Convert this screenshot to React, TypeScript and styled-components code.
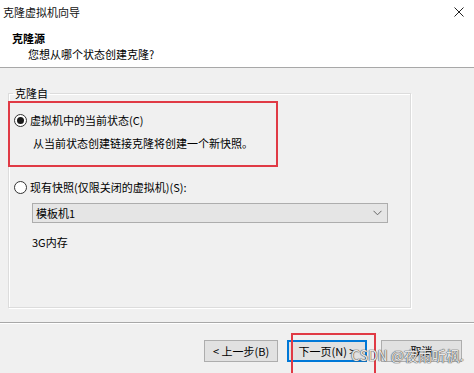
import React from "react";
import styled, { createGlobalStyle } from "styled-components";

const Global = createGlobalStyle`
  html, body { margin: 0; padding: 0; background: #f0f0f0; }
  * { box-sizing: border-box; }
  body { font-family: "Noto Sans CJK SC", "Noto Sans", sans-serif; font-size: 11px; color: #000; }
`;

const Window = styled.div`
  width: 474px;
  height: 373px;
  display: flex;
  flex-direction: column;
  background: #f0f0f0;
  overflow: hidden;
  position: relative;
`;

const Header = styled.div`
  height: 68px;
  background: #fff;
  border-bottom: 1px solid #a8a8a8;
  display: flex;
  flex-direction: column;
`;

const TitleBar = styled.div`
  height: 26px;
  display: flex;
  align-items: center;
  justify-content: space-between;
  padding: 0 10px 2px 3px;
`;

const Title = styled.span`
  font-size: 11px;
  line-height: 15px;
  color: #111;
`;

const HeaderText = styled.div`
  padding: 5px 0 0 12px;
  display: flex;
  flex-direction: column;
  gap: 1px;
`;

const Heading = styled.div`
  font-weight: 700;
  line-height: 15px;
`;

const SubHeading = styled.div`
  padding-left: 16px;
  line-height: 15px;
`;

const Body = styled.div`
  height: 255px;
  border-bottom: 1px solid #a8a8a8;
  box-shadow: 0 1px 0 #fff;
  padding: 18px 0 0 8px;
`;

const Group = styled.fieldset`
  margin: 0;
  width: 403px;
  border: 1px solid #dcdcdc;
  box-shadow: inset 1px 1px 0 #fff, 1px 1px 0 #fff;
  padding: 0 0 57px 0;
  min-width: 0;
`;

const Legend = styled.legend`
  margin-left: 4px;
  padding: 0 2px;
  line-height: 15px;
`;

const Highlight = styled.div`
  margin-left: -1px;
  width: 270px;
  height: 66px;
  border: 2px solid #e03a45;
  padding: 10px 0 0 4px;
  display: flex;
  flex-direction: column;
  gap: 8px;
`;

const OptionRow = styled.label<{ $top?: number }>`
  display: flex;
  align-items: center;
  gap: 3px;
  line-height: 15px;
  margin-top: ${(p) => p.$top ?? 0}px;
  margin-left: ${(p) => (p.$top ? 5 : 0)}px;
`;

const Radio = styled.span<{ $checked?: boolean }>`
  width: 13px;
  height: 13px;
  border-radius: 50%;
  border: 1px solid #333;
  background: #fff;
  display: flex;
  align-items: center;
  justify-content: center;
  flex-shrink: 0;
  &::after {
    content: "";
    width: 7px;
    height: 7px;
    border-radius: 50%;
    background: ${(p) => (p.$checked ? "#1a1a1a" : "transparent")};
  }
`;

const Description = styled.div`
  padding-left: 19px;
  line-height: 15px;
`;

const Select = styled.div`
  margin: 8px 0 0 23px;
  width: 356px;
  height: 20px;
  background: #e5e5e5;
  border: 1px solid #adadad;
  display: flex;
  align-items: center;
  justify-content: space-between;
  padding: 0 5px 0 3px;
  line-height: 15px;
`;

const Note = styled.div`
  margin: 12px 0 0 23px;
  line-height: 15px;
`;

const Footer = styled.div`
  flex: 1;
  display: flex;
  justify-content: flex-end;
  align-items: flex-start;
  padding: 17px 12px 0 0;
  position: relative;
`;

const Button = styled.button<{ $w: number; $mr?: number; $primary?: boolean }>`
  width: ${(p) => p.$w}px;
  height: 22px;
  margin: 0 ${(p) => p.$mr ?? 0}px 0 0;
  padding: 0;
  font-family: inherit;
  font-size: 11px;
  line-height: 15px;
  color: #000;
  background: #e1e1e1;
  border: 1px solid ${(p) => (p.$primary ? "#0078d7" : "#adadad")};
  box-shadow: ${(p) => (p.$primary ? "inset 0 0 0 1px #0078d7" : "none")};
`;

const NextHighlight = styled.div`
  position: absolute;
  left: 291px;
  top: 10px;
  width: 85px;
  height: 44px;
  border: 2px solid #e03a45;
  pointer-events: none;
`;

const Watermark = styled.div`
  position: absolute;
  left: 351px;
  top: 23px;
  font-size: 14px;
  line-height: 18px;
  color: rgba(250, 250, 250, 0.9);
  text-shadow: 0 0 1px #555, 0 0 1px #555, 0 0 1px #666;
  white-space: nowrap;
  pointer-events: none;
`;

export default function App() {
  return (
    <Window>
      <Global />
      <Header>
        <TitleBar>
          <Title>克隆虚拟机向导</Title>
          <svg width="10" height="10" viewBox="0 0 10 10">
            <path d="M0.5 0.5 L9.5 9.5 M9.5 0.5 L0.5 9.5" stroke="#222" strokeWidth="1" fill="none" />
          </svg>
        </TitleBar>
        <HeaderText>
          <Heading>克隆源</Heading>
          <SubHeading>您想从哪个状态创建克隆?</SubHeading>
        </HeaderText>
      </Header>
      <Body>
        <Group>
          <Legend>克隆自</Legend>
          <Highlight>
            <OptionRow>
              <Radio $checked />
              虚拟机中的当前状态(C)
            </OptionRow>
            <Description>从当前状态创建链接克隆将创建一个新快照。</Description>
          </Highlight>
          <OptionRow $top={13}>
            <Radio />
            现有快照(仅限关闭的虚拟机)(S):
          </OptionRow>
          <Select>
            <span>模板机1</span>
            <svg width="9" height="6" viewBox="0 0 9 6">
              <path d="M0.5 0.8 L4.5 4.8 L8.5 0.8" stroke="#666" strokeWidth="1" fill="none" />
            </svg>
          </Select>
          <Note>3G内存</Note>
        </Group>
      </Body>
      <Footer>
        <Button $w={74} $mr={9}>&lt; 上一步(B)</Button>
        <Button $w={80} $mr={14} $primary>下一页(N) &gt;</Button>
        <Button $w={81}>取消</Button>
        <NextHighlight />
        <Watermark>CSDN @夜雨听枫.</Watermark>
      </Footer>
    </Window>
  );
}
